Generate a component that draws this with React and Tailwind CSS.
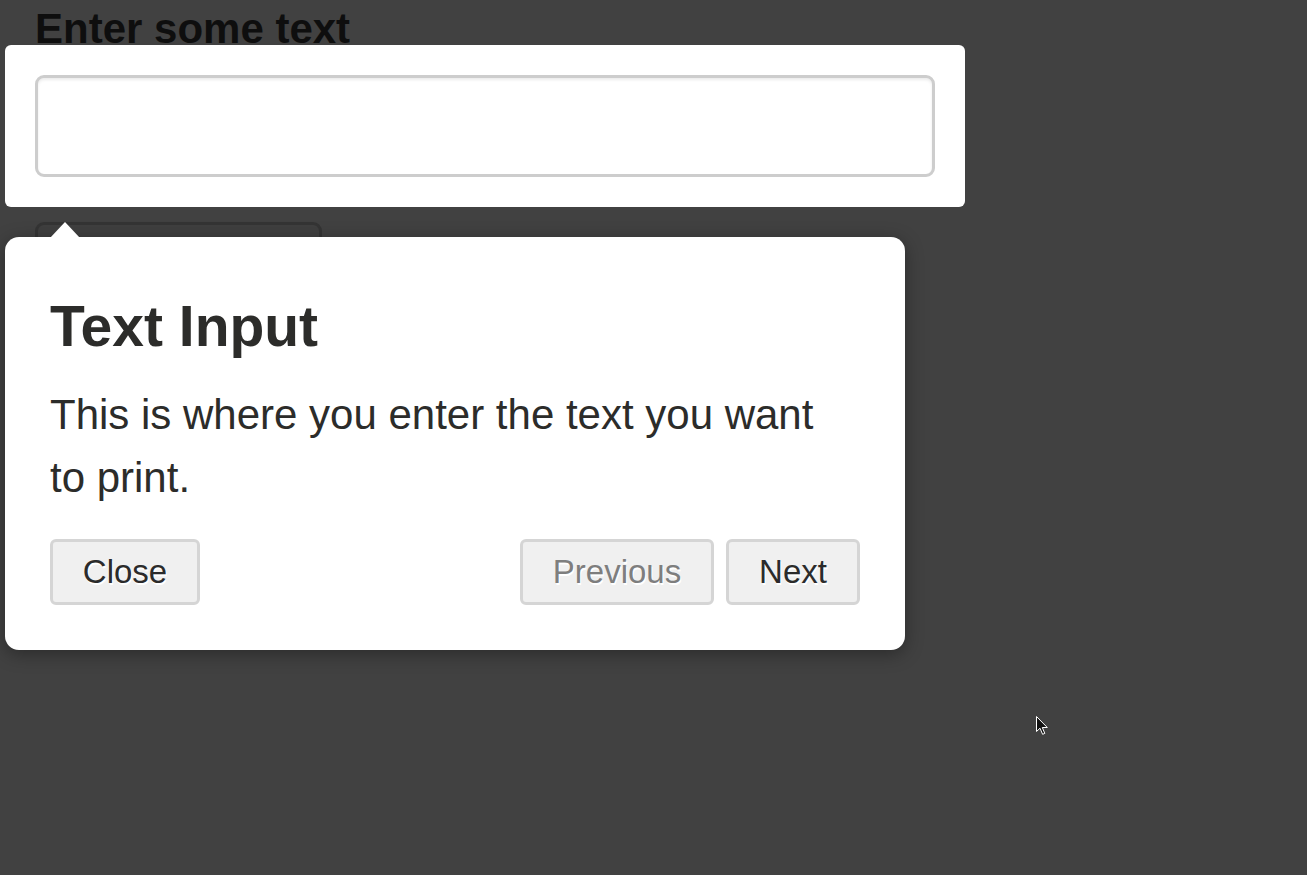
import React from "react";

export default function App() {
  return (
    <div
      className="relative min-h-[875px] w-full bg-[#414141] overflow-hidden"
      style={{ fontFamily: '"Liberation Sans", Arial, sans-serif' }}
    >
      <div className="w-[960px] pl-[35px] pt-[5px]">
        <h1 className="text-[42px] leading-[48px] font-bold text-[#0e0e0e] m-0">
          Enter some text
        </h1>
        <div className="relative z-10 -mt-[8px] -ml-[30px] w-[960px] bg-white rounded-[6px] p-[30px]">
          <div className="h-[102px] w-full rounded-[9px] border-[3px] border-[#cdcdcd] bg-white shadow-[inset_0_2px_3px_rgba(0,0,0,0.08)]" />
        </div>
        <div className="mt-[15px] h-[66px] w-[287px] rounded-[9px] border-[3px] border-[#343434] bg-[#3f3f3f]" />
      </div>

      {/* Tour popover */}
      <div className="absolute left-[5px] top-[237px] z-20 w-[900px] rounded-[14px] bg-white px-[45px] pt-[45px] pb-[45px] shadow-[0_4px_18px_rgba(0,0,0,0.35)]">
        <svg
          className="absolute -top-[15px] left-[45px]"
          width="30"
          height="16"
          viewBox="0 0 30 16"
        >
          <polygon points="0,16 15,0 30,16" fill="#ffffff" />
        </svg>
        <h2 className="mt-[12px] text-[57px] leading-[64px] font-bold text-[#2c2c2a]">
          Text Input
        </h2>
        <p className="mt-[25px] text-[42px] leading-[63px] text-[#2c2c2a] pr-[20px]">
          This is where you enter the text you want to print.
        </p>
        <div className="mt-[30px] flex items-center justify-between">
          <button className="h-[66px] w-[150px] rounded-[6px] border-[3px] border-[#d5d5d5] bg-[#f0f0f0] text-[33px] text-[#2b2b2b] [text-shadow:1px_2px_0_#ffffff] flex items-center justify-center">
            Close
          </button>
          <div className="flex gap-[12px]">
            <button className="h-[66px] w-[194px] rounded-[6px] border-[3px] border-[#d5d5d5] bg-[#f0f0f0] text-[33px] text-[#7e7e7e] [text-shadow:1px_2px_0_#ffffff] flex items-center justify-center">
              Previous
            </button>
            <button className="h-[66px] w-[134px] rounded-[6px] border-[3px] border-[#d5d5d5] bg-[#f0f0f0] text-[33px] text-[#2b2b2b] [text-shadow:1px_2px_0_#ffffff] flex items-center justify-center">
              Next
            </button>
          </div>
        </div>
      </div>

      {/* mouse cursor */}
      <svg
        className="absolute left-[1036px] top-[716px] z-30"
        width="13"
        height="20"
        viewBox="0 0 13 20"
      >
        <path
          d="M0.5 0.5 L0.5 15.5 L4 12.2 L6.6 18.3 L8.8 17.4 L6.3 11.5 L11.3 11.5 Z"
          fill="#111111"
          stroke="#ffffff"
          strokeWidth="1"
        />
      </svg>
    </div>
  );
}
